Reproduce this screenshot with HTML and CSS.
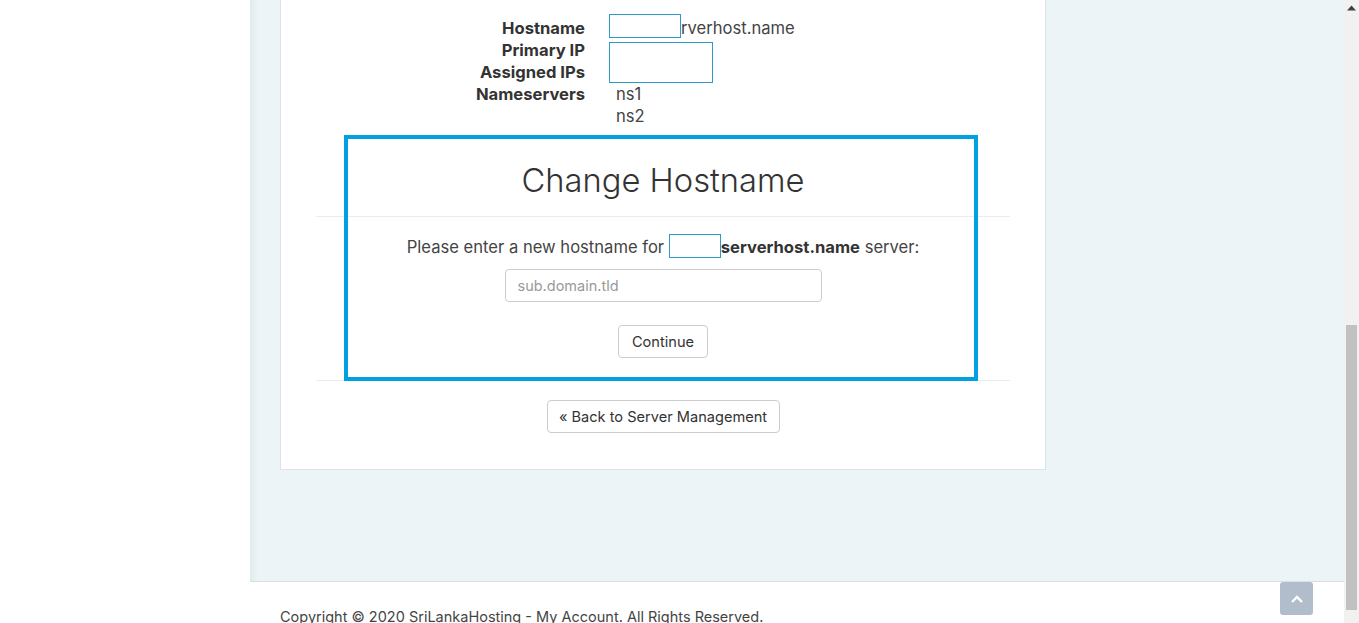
FILE: index.html
```html
<!DOCTYPE html>
<html lang="en">
<head>
<meta charset="utf-8">
<title>Change Hostname</title>
<link rel="stylesheet" href="styles.css">
</head>
<body>
<div class="sidebar"></div>
<div class="main">
  <div class="content">
    <div class="card">
      <div class="info">
        <div class="label">Hostname</div>
        <div class="value"><span class="redact redact-host"></span>rverhost.name</div>
        <div class="label">Primary IP</div>
        <div class="value value-ip"><span class="redact redact-ip"></span></div>
        <div class="label">Assigned IPs</div>
        <div class="label">Nameservers</div>
        <div class="value value-ns">ns1</div>
        <div class="label"></div>
        <div class="value value-ns">ns2</div>
      </div>
      <div class="panel-head">
        <h2 class="panel-title">Change Hostname</h2>
      </div>
      <div class="panel-body">
        <p class="prompt">Please enter a new hostname for <span class="redact redact-inline"></span><strong>serverhost.name</strong> server:</p>
        <input class="host-input" type="text" placeholder="sub.domain.tld">
        <button class="btn btn-continue" type="button">Continue</button>
      </div>
      <div class="back-row">
        <button class="btn btn-back" type="button">« Back to Server Management</button>
      </div>
      <div class="highlight"></div>
    </div>
  </div>
  <div class="footer">Copyright © 2020 SriLankaHosting - My Account. All Rights Reserved.</div>
  <a class="to-top" href="#"><svg width="14" height="10" viewBox="0 0 14 10"><path d="M2 8 L7 3 L12 8" fill="none" stroke="#fff" stroke-width="2.4"/></svg></a>
</div>
<div class="scrollbar">
  <div class="sb-arrow"><svg width="9" height="6" viewBox="0 0 9 6"><path d="M0 5.5 L4.5 0.5 L9 5.5 Z" fill="#404040"/></svg></div>
  <div class="sb-track"></div>
  <div class="sb-thumb"></div>
  <div class="sb-bottom"></div>
</div>
</body>
</html>
```

FILE: styles.css
```css
* { box-sizing: border-box; }

html, body {
  margin: 0;
  height: 623px;
  overflow: hidden;
}

body {
  display: flex;
  font-family: "Inter", "Open Sans", sans-serif;
  color: #333;
  background: #fff;
}

.sidebar {
  width: 250px;
  flex: none;
  background: #fff;
}

.main {
  flex: 1;
  display: flex;
  flex-direction: column;
  position: relative;
  min-width: 0;
}

.content {
  flex: 1;
  background: #ecf4f7;
  box-shadow: inset 7px 0 6px -4px #dde9e8;
  padding-left: 30px;
}

.card {
  position: relative;
  width: 766px;
  background: #fff;
  border: 1px solid #dde3e8;
  border-top: none;
  padding: 0 35px 36px;
}

.info {
  display: grid;
  grid-template-columns: 269px 1fr;
  column-gap: 24px;
  padding-top: 17px;
  font-size: 16.6px;
  line-height: 22px;
  color: #444;
}

.label {
  text-align: right;
  font-weight: 700;
  color: #333;
}

.value { display: flex; align-items: center; }

.value-ip {
  grid-row: span 2;
  align-items: flex-start;
}

.value-ns { padding-left: 7px; }

.redact {
  display: inline-block;
  border: 1px solid #2d9ac8;
  background: #fff;
}

.redact-host {
  width: 72px;
  height: 24px;
  margin-top: -4px;
}

.redact-ip {
  width: 104px;
  height: 41px;
  margin-top: 3px;
}

.redact-inline {
  width: 52px;
  height: 24px;
  vertical-align: middle;
  margin-top: -4px;
}

.panel-head {
  padding: 33px 0 16px;
  border-bottom: 1px solid #e9ecef;
  text-align: center;
}

.panel-title {
  margin: 0;
  font-size: 32.7px;
  line-height: 40px;
  font-weight: 300;
  color: #333;
}

.panel-body {
  display: flex;
  flex-direction: column;
  align-items: center;
  padding: 18px 0 22px;
  border-bottom: 1px solid #e9ecef;
}

.prompt {
  margin: 0;
  font-size: 16.6px;
  line-height: 24px;
  color: #444;
}

.prompt strong { color: #333; font-weight: 700; }

.host-input {
  margin-top: 10px;
  width: 317px;
  height: 33px;
  border: 1px solid #ccc;
  border-radius: 4px;
  padding: 0 12px;
  font-family: inherit;
  font-size: 14.5px;
  color: #555;
}

.host-input::placeholder { color: #999; }

.btn {
  height: 33px;
  border: 1px solid #ccc;
  border-radius: 4px;
  background: #fff;
  font-family: inherit;
  font-size: 14.6px;
  color: #333;
  padding: 0 8px;
  white-space: nowrap;
}

.btn-continue {
  margin-top: 23px;
  width: 90px;
}

.back-row {
  display: flex;
  justify-content: center;
  padding-top: 19px;
}

.btn-back { width: 233px; }

.highlight {
  position: absolute;
  left: 63px;
  top: 135px;
  width: 634px;
  height: 246px;
  border: 4px solid #00a0e3;
  pointer-events: none;
}

.footer {
  height: 42px;
  flex: none;
  background: #fff;
  border-top: 1px solid #dcdfe2;
  padding: 25px 0 0 30px;
  font-size: 14.5px;
  line-height: 20px;
  color: #444;
}

.to-top {
  position: absolute;
  left: 1030px;
  top: 582px;
  width: 33px;
  height: 33px;
  background: #b1bdcb;
  border-radius: 3px;
  display: flex;
  align-items: center;
  justify-content: center;
}

.scrollbar {
  width: 15px;
  flex: none;
  background: #f1f1f1;
  display: flex;
  flex-direction: column;
  align-items: center;
}

.sb-arrow {
  height: 15px;
  display: flex;
  align-items: center;
  justify-content: center;
  flex: none;
}

.sb-track { height: 310px; flex: none; }

.sb-thumb {
  width: 11px;
  height: 285px;
  background: #c1c1c1;
  flex: none;
}

.sb-bottom { flex: 1; }
```
